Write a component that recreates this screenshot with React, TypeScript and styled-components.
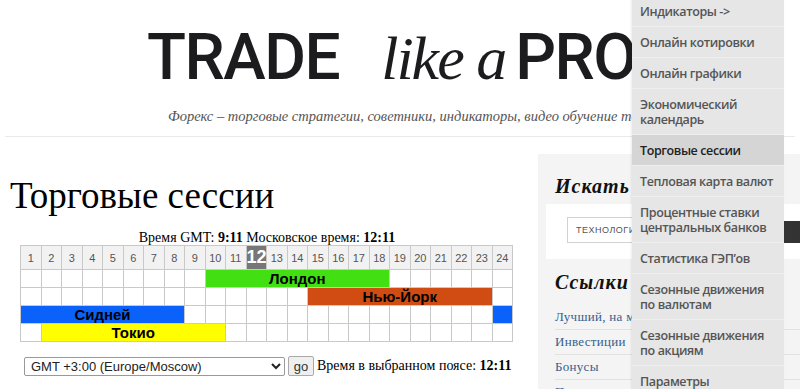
import React from 'react';
import styled, { createGlobalStyle } from 'styled-components';

const GlobalStyle = createGlobalStyle`
  html, body {
    margin: 0;
    padding: 0;
    background: #fff;
    overflow: hidden;
  }
  body {
    font-family: 'Liberation Serif', 'Times New Roman', serif;
    color: #000;
  }
`;

const Page = styled.div`
  position: relative;
  width: 800px;
  height: 389px;
  overflow: hidden;
`;

const Header = styled.header`
  margin: 0 5px;
  height: 137px;
  border-bottom: 1px solid #e9e9e9;
  box-sizing: border-box;
  padding: 20px 0 0 142px;
`;

const Logo = styled.div`
  display: flex;
  align-items: baseline;
  height: 78px;
  white-space: nowrap;
  color: #1c1c1e;
`;

const LogoSans = styled.span`
  font-family: Roboto, Lato, 'Liberation Sans', sans-serif;
  font-weight: 500;
  font-size: 64px;
  letter-spacing: -1.5px;
`;

const LogoScript = styled.span`
  font-family: 'Liberation Serif', serif;
  font-style: italic;
  font-size: 62px;
  letter-spacing: -2px;
  margin: 0 10px 0 42px;
`;

const Tagline = styled.div`
  margin: 10px 0 0 21px;
  font-family: 'Liberation Serif', serif;
  font-style: italic;
  font-size: 14.5px;
  color: #555;
  white-space: nowrap;
`;

const Body = styled.div`
  display: flex;
  align-items: flex-start;
`;

const Main = styled.main`
  width: 538px;
  flex-shrink: 0;
`;

const Title = styled.h1`
  margin: 38px 0 0 10px;
  font-size: 37px;
  font-weight: normal;
  line-height: 41px;
`;

const TimeLine = styled.div`
  margin: 14px 0 0 21px;
  width: 492px;
  text-align: center;
  font-size: 14px;
  line-height: 15px;
`;

const Grid = styled.table`
  margin-left: 20px;
  width: 493px;
  table-layout: fixed;
  border-collapse: collapse;
`;

const HourCell = styled.th<{ $now?: boolean }>`
  height: 23px;
  padding: 0;
  border: 1px solid #c9c9c9;
  background: ${(p) => (p.$now ? '#777' : '#f2f2f2')};
  color: ${(p) => (p.$now ? '#fff' : '#555')};
  font-family: 'Liberation Sans', Arial, sans-serif;
  font-size: ${(p) => (p.$now ? '18px' : '11px')};
  font-weight: ${(p) => (p.$now ? 700 : 400)};
  text-align: center;
`;

const Cell = styled.td<{ $color?: string }>`
  height: 17px;
  padding: 0;
  border: 1px solid #c9c9c9;
  background: ${(p) => p.$color || '#fff'};
  font-family: 'Liberation Sans', Arial, sans-serif;
  font-size: 15px;
  font-weight: 700;
  line-height: 17px;
  text-align: center;
  overflow: hidden;
  white-space: nowrap;
`;

const ZoneRow = styled.div`
  display: flex;
  align-items: center;
  gap: 3px;
  margin: 14px 0 0 24px;
  font-size: 14px;
`;

const ZoneSelect = styled.select`
  width: 261px;
  height: 19px;
  font-family: 'Liberation Sans', Arial, sans-serif;
  font-size: 13px;
  color: #222;
  border: 1px solid #999;
  border-radius: 2px;
  background: #fff;
  padding: 0 0 0 2px;
`;

const GoButton = styled.button`
  height: 20px;
  width: 26px;
  padding: 0;
  font-family: 'Liberation Sans', Arial, sans-serif;
  font-size: 13px;
  color: #333;
  background: #efefef;
  border: 1px solid #aaa;
  border-radius: 2px;
`;

const Sidebar = styled.aside`
  margin-top: 17px;
  width: 300px;
  flex-shrink: 0;
  height: 260px;
  background: #f4f4f4;
  box-sizing: border-box;
  padding: 20px 0 0 17px;
`;

const WidgetTitle = styled.h3<{ $gap?: number }>`
  margin: ${(p) => p.$gap || 0}px 0 0;
  font-family: 'Liberation Serif', serif;
  font-style: italic;
  font-weight: 700;
  font-size: 20px;
  line-height: 24px;
  letter-spacing: 1px;
  color: #111;
`;

const SearchPanel = styled.div`
  margin: 6px 0 0 -9px;
  height: 55px;
  background: #fff;
  display: flex;
  align-items: flex-start;
  box-sizing: border-box;
  padding: 13px 0 0 21px;
`;

const SearchInput = styled.input`
  width: 217px;
  height: 26px;
  box-sizing: border-box;
  border: 1px solid #d2d2d2;
  padding: 0 8px;
  font-family: 'Liberation Sans', Arial, sans-serif;
  font-size: 9px;
  letter-spacing: 0.5px;
  color: #555;
  text-transform: uppercase;
  &::placeholder {
    color: #555;
  }
`;

const SearchButton = styled.button`
  margin-top: 4px;
  width: 40px;
  height: 22px;
  border: 0;
  background: #333;
`;

const LinkList = styled.ul`
  list-style: none;
  margin: 11px 0 0;
  padding: 0;
  width: 250px;
`;

const LinkItem = styled.li`
  height: 24px;
  line-height: 23px;
  border-bottom: 1px solid #e2e2e2;
  font-size: 13px;
  letter-spacing: 0.3px;
  color: #36608c;
  white-space: nowrap;
`;

const Menu = styled.ul`
  position: absolute;
  top: -4px;
  left: 632px;
  width: 152px;
  margin: 0;
  padding: 0;
  list-style: none;
  background: #e6e6e6;
  box-shadow: -1px 0 2px rgba(0, 0, 0, 0.08);
`;

const MenuItem = styled.li<{ $active?: boolean }>`
  padding: 8px 6px 7px 8px;
  line-height: 15px;
  border-bottom: 1px solid #eeeeee;
  font-family: 'Open Sans', 'Liberation Sans', sans-serif;
  font-weight: 600;
  font-size: 12.5px;
  letter-spacing: -0.4px;
  color: ${(p) => (p.$active ? '#222' : '#555')};
  background: ${(p) => (p.$active ? '#d5d5d5' : 'transparent')};
`;

type Session = { name: string; from: number; to: number; color: string };

const sessions: Session[][] = [
  [{ name: 'Лондон', from: 10, to: 18, color: '#42e012' }],
  [{ name: 'Нью-Йорк', from: 15, to: 23, color: '#d14c12' }],
  [
    { name: 'Сидней', from: 1, to: 8, color: '#0a62fa' },
    { name: '', from: 24, to: 24, color: '#0a62fa' },
  ],
  [{ name: 'Токио', from: 2, to: 10, color: '#ffff00' }],
];

const menuItems = [
  'Индикаторы ->',
  'Онлайн котировки',
  'Онлайн графики',
  'Экономический календарь',
  'Торговые сессии',
  'Тепловая карта валют',
  'Процентные ставки центральных банков',
  'Статистика ГЭП’ов',
  'Сезонные движения по валютам',
  'Сезонные движения по акциям',
  'Параметры',
];

const hours = Array.from({ length: 24 }, (_, i) => i + 1);
const NOW = 12;

function SessionRow({ items }: { items: Session[] }) {
  const cells: React.ReactNode[] = [];
  let h = 1;
  while (h <= 24) {
    const s = items.find((it) => it.from === h);
    if (s) {
      cells.push(
        <Cell key={h} colSpan={s.to - s.from + 1} $color={s.color}>
          {s.name}
        </Cell>,
      );
      h = s.to + 1;
    } else {
      cells.push(<Cell key={h} />);
      h++;
    }
  }
  return <tr>{cells}</tr>;
}

export default function App() {
  return (
    <Page>
      <GlobalStyle />
      <Header>
        <Logo>
          <LogoSans>TRADE</LogoSans>
          <LogoScript>like a</LogoScript>
          <LogoSans>PRO</LogoSans>
        </Logo>
        <Tagline>Форекс – торговые стратегии, советники, индикаторы, видео обучение торговле</Tagline>
      </Header>

      <Body>
        <Main>
          <Title>Торговые сессии</Title>
          <TimeLine>
            Время GMT: <b>9:11</b> Московское время: <b>12:11</b>
          </TimeLine>
          <Grid>
            <thead>
              <tr>
                {hours.map((h) => (
                  <HourCell key={h} $now={h === NOW}>
                    {h}
                  </HourCell>
                ))}
              </tr>
            </thead>
            <tbody>
              {sessions.map((row, i) => (
                <SessionRow key={i} items={row} />
              ))}
            </tbody>
          </Grid>
          <ZoneRow>
            <ZoneSelect defaultValue='msk'>
              <option value='msk'>GMT +3:00 (Europe/Moscow)</option>
            </ZoneSelect>
            <GoButton>go</GoButton>
            <span>
              Время в выбранном поясе: <b>12:11</b>
            </span>
          </ZoneRow>
        </Main>

        <Sidebar>
          <WidgetTitle>Искать</WidgetTitle>
          <SearchPanel>
            <SearchInput placeholder='Технологии поиска' />
            <SearchButton />
          </SearchPanel>
          <WidgetTitle $gap={11}>Ссылки</WidgetTitle>
          <LinkList>
            <LinkItem>Лучший, на мой взгляд, брокер</LinkItem>
            <LinkItem>Инвестиции</LinkItem>
            <LinkItem>Бонусы</LinkItem>
            <LinkItem>Партнерская программа</LinkItem>
          </LinkList>
        </Sidebar>
      </Body>

      <Menu>
        {menuItems.map((m) => (
          <MenuItem key={m} $active={m === 'Торговые сессии'}>
            {m}
          </MenuItem>
        ))}
      </Menu>
    </Page>
  );
}
